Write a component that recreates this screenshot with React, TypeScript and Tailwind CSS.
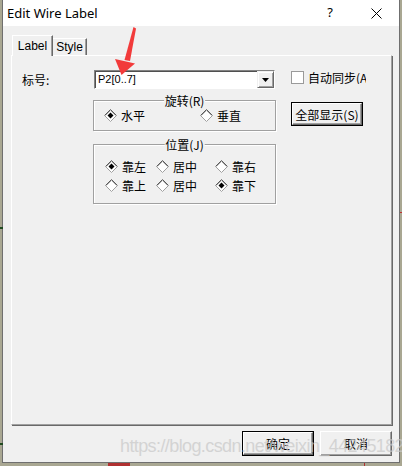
import React from "react";

const cjk = "font-['Noto_Sans_CJK_SC','Liberation_Sans',sans-serif]";

function Diamond({ checked }: { checked?: boolean }) {
  return (
    <svg width="13" height="13" viewBox="0 0 13 13" className="shrink-0">
      <polygon points="6.5,0.5 12.5,6.5 6.5,12.5 0.5,6.5" fill="#fff" />
      <polyline points="0.5,6.5 6.5,0.5 12.5,6.5" fill="none" stroke="#5a5a5a" />
      <polyline points="1.5,6.5 6.5,1.5 11.5,6.5" fill="none" stroke="#a8a8a8" />
      <polyline points="0.5,6.5 6.5,12.5 12.5,6.5" fill="none" stroke="#a0a0a0" />
      {checked && <polygon points="6.5,3.5 9.5,6.5 6.5,9.5 3.5,6.5" fill="#000" />}
    </svg>
  );
}

function Radio({ label, checked }: { label: string; checked?: boolean }) {
  return (
    <div className="flex items-center gap-[4px]">
      <Diamond checked={checked} />
      <span className={`${cjk} text-[12px] leading-[13px] text-black`}>{label}</span>
    </div>
  );
}

function Group({ title, className, children }: { title: string; className: string; children: React.ReactNode }) {
  return (
    <div className={`relative border border-[#a0a0a0] shadow-[inset_1px_1px_0_#fff,1px_1px_0_#fff] ${className}`}>
      <span className={`absolute -top-[7px] left-1/2 -translate-x-1/2 bg-[#f0f0f0] px-[1px] ${cjk} text-[12px] leading-[13px] text-black`}>
        {title}
      </span>
      {children}
    </div>
  );
}

function WinButton({ label, isDefault, className }: { label: string; isDefault?: boolean; className: string }) {
  const inner = (
    <div className="flex h-full w-full items-center justify-center border border-t-white border-l-white border-b-[#696969] border-r-[#696969] bg-[#f0f0f0] shadow-[inset_-1px_-1px_0_#a0a0a0]">
      <span className={`${cjk} text-[12px] leading-[13px] text-black`}>{label}</span>
    </div>
  );
  if (isDefault) {
    return <div className={`border border-black ${className}`}>{inner}</div>;
  }
  return <div className={className}>{inner}</div>;
}

export default function App() {
  return (
    <div className="relative h-[466px] w-[402px] overflow-hidden bg-[#a9a792] pl-[2px]">
      {/* dialog window */}
      <div className="flex h-[463px] w-[398px] flex-col border-x border-b border-[#6f6f6f]">
        {/* title bar */}
        <div className="flex h-[26px] items-center bg-white">
          <span className="pl-[4px] font-['Noto_Sans',sans-serif] text-[13px] leading-[16px] text-black">
            Edit Wire Label
          </span>
          <div className="ml-auto flex h-full">
            <div className="flex w-[46px] items-center justify-center font-['Noto_Sans',sans-serif] text-[13px] text-black">?</div>
            <div className="flex w-[46px] items-center justify-center">
              <svg width="11" height="11" viewBox="0 0 11 11">
                <path d="M0.5 0.5 L10.5 10.5 M10.5 0.5 L0.5 10.5" stroke="#000" strokeWidth="1" />
              </svg>
            </div>
          </div>
        </div>

        {/* body */}
        <div className="flex-1 bg-[#f0f0f0] pl-[8px] pt-[9px]">
          {/* tabs */}
          <div className="relative z-10 flex h-[20px] items-end">
            <div className="ml-[1px] flex h-[21px] w-[41px] -mb-[1px] items-center justify-center border-l border-t border-r border-l-white border-t-white border-r-[#696969] bg-[#f0f0f0] font-['Liberation_Sans',sans-serif] text-[12px] text-black shadow-[inset_-1px_0_0_#a0a0a0]">
              Label
            </div>
            <div className="flex h-[17px] w-[34px] items-center justify-center border-t border-r border-t-white border-r-[#696969] font-['Liberation_Sans',sans-serif] text-[12px] text-black shadow-[inset_-1px_0_0_#a0a0a0]">
              Style
            </div>
          </div>

          {/* tab panel */}
          <div className="h-[370px] w-[381px] border border-t-white border-l-white border-b-[#a0a0a0] border-r-[#a0a0a0] pl-[10px] pt-[14px] shadow-[1px_1px_0_#696969]">
            <div className="flex h-[19px]">
              <div className={`flex w-[72px] items-center ${cjk} text-[12px] text-black`}>标号:</div>
              <div className="flex h-[19px] w-[181px] border border-t-[#828282] border-l-[#828282] border-b-white border-r-white bg-white shadow-[inset_1px_1px_0_#505050]">
                <span className="flex-1 pl-[3px] pt-[1px] font-['Liberation_Sans',sans-serif] text-[11px] leading-[15px] text-black">
                  P2[0..7]
                </span>
                <div className="flex h-[17px] w-[17px] items-center justify-center border border-t-[#f0f0f0] border-l-[#f0f0f0] border-b-[#696969] border-r-[#696969] bg-[#f0f0f0] shadow-[inset_1px_1px_0_#fff,inset_-1px_-1px_0_#a0a0a0]">
                  <svg width="7" height="4" viewBox="0 0 7 4">
                    <polygon points="0,0 7,0 3.5,4" fill="#000" />
                  </svg>
                </div>
              </div>
              <div className="ml-[16px] flex items-start gap-[4px] pt-[1px]">
                <div className="h-[13px] w-[13px] border border-[#9a9a9a] bg-white" />
                <span className={`w-[58px] overflow-hidden whitespace-nowrap ${cjk} text-[12px] leading-[13px] text-black`}>
                  自动同步(A
                </span>
              </div>
            </div>

            <div className="ml-[71px] mt-[11px] flex">
              <div className="flex w-[183px] flex-col">
                <Group title="旋转(R)" className="flex h-[31px] items-center pl-[10px]">
                  <div className="w-[96px]">
                    <Radio label="水平" checked />
                  </div>
                  <Radio label="垂直" />
                </Group>
                <Group title="位置(J)" className="mt-[13px] grid h-[60px] auto-rows-[19px] grid-cols-[51px_59px_1fr] content-start pl-[11px] pt-[12px]">
                  <Radio label="靠左" checked />
                  <Radio label="居中" />
                  <Radio label="靠右" />
                  <Radio label="靠上" />
                  <Radio label="居中" />
                  <Radio label="靠下" checked />
                </Group>
              </div>
              <div className="ml-[15px] mt-[2px]">
                <WinButton label="全部显示(S)" isDefault className="h-[24px] w-[72px]" />
              </div>
            </div>
          </div>

          {/* dialog buttons */}
          <div className="mt-[6px] flex w-[381px] justify-end gap-[6px]">
            <WinButton label="确定" isDefault className="h-[25px] w-[72px]" />
            <WinButton label="取消" className="h-[25px] w-[72px]" />
          </div>
        </div>
      </div>

      {/* schematic bits behind the dialog */}
      <div className="absolute bottom-0 left-[108px] h-[3px] w-[22px] bg-[#b03030]" />
      <div className="absolute bottom-0 left-[364px] h-[3px] w-[1px] bg-[#b03030]" />
      <div className="absolute left-[400px] top-[212px] h-[1px] w-[2px] bg-[#c03030]" />
      <div className="absolute left-0 top-[227px] h-[2px] w-[3px] bg-[#1f4a1f]" />
      <div className="absolute left-0 top-[443px] h-[2px] w-[3px] bg-[#1f4a1f]" />

      {/* watermark */}
      <span className="pointer-events-none absolute left-[120px] top-[433px] whitespace-nowrap font-['Liberation_Sans',sans-serif] text-[18px] tracking-[-0.6px] text-[#c8c8c8] opacity-70">
        https://blog.csdn.net/weixin_44245182
      </span>

      {/* red annotation arrow */}
      <svg className="pointer-events-none absolute left-0 top-0" width="402" height="466" viewBox="0 0 402 466">
        <polygon points="133.5,27 136,28.5 130,61 124.5,60" fill="#f23b3b" />
        <polygon points="115,59 135,63.5 121.5,75" fill="#f23b3b" />
      </svg>
    </div>
  );
}
